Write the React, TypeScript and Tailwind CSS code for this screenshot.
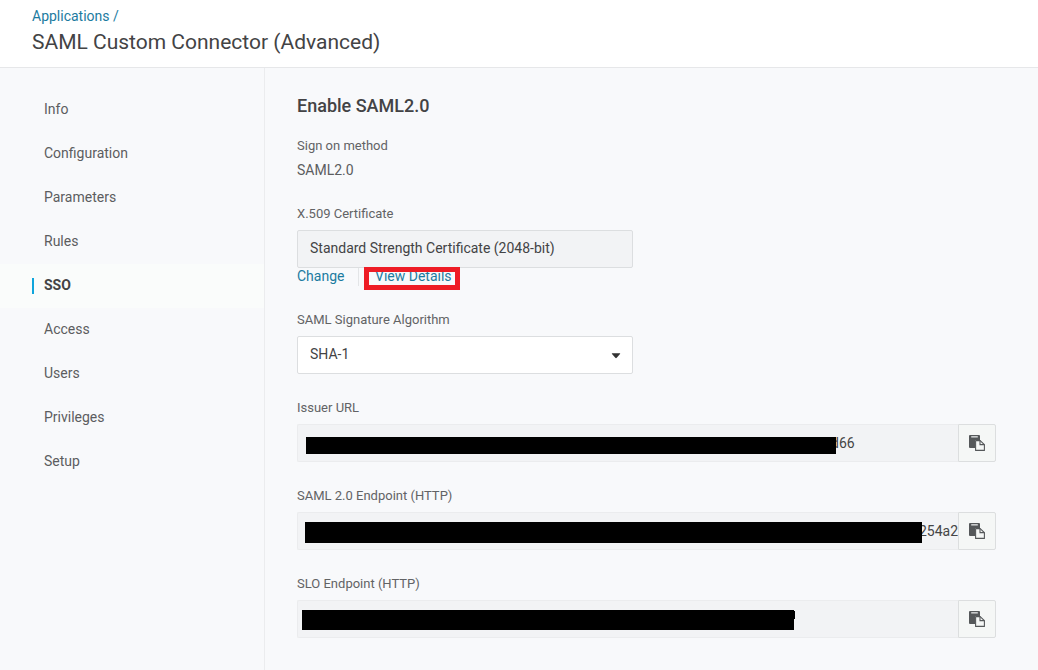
import React from "react";

const navItems = [
  "Info",
  "Configuration",
  "Parameters",
  "Rules",
  "SSO",
  "Access",
  "Users",
  "Privileges",
  "Setup",
];

const labelClass = "block text-[13px] leading-5 text-[#626365]";

function PasteIcon() {
  return (
    <svg width="18" height="16" viewBox="0 0 18 16" aria-hidden="true">
      <path d="M2 0h9q1 0 1 1v4H7v8H2q-1 0-1-1V1q0-1 1-1z" fill="#55585a" />
      <path d="M3.2 1h6.6v1.6H3.2z" fill="#c9cbcc" />
      <path
        d="M7.6 5.6h4.6l4.2 4v5.8H7.6z"
        fill="#f5f7f6"
        stroke="#55585a"
        strokeWidth="1.1"
        strokeLinejoin="round"
      />
      <path d="M12 5.6v4h4.4" fill="none" stroke="#55585a" strokeWidth="1.1" />
    </svg>
  );
}

type CopyFieldProps = {
  id: string;
  label: string;
  value: string;
  inset: string;
  children: React.ReactNode;
};

function CopyField({ id, label, value, inset, children }: CopyFieldProps) {
  return (
    <div>
      <label htmlFor={id} className={labelClass}>
        {label}
      </label>
      <div className="mt-1.5 flex h-[38px]">
        <div className="relative min-w-0 flex-1">
          <input
            id={id}
            readOnly
            value={value}
            className={`h-full w-full rounded-l-xs border border-r-0 border-[#ebecee] bg-[#f2f3f5] text-sm text-[#454546] outline-none ${inset}`}
          />
          {children}
        </div>
        <button
          type="button"
          aria-label={`Copy ${label}`}
          className="flex w-[38px] items-center justify-center rounded-r-xs border border-[#dcdedf] bg-[#f5f7f6]"
        >
          <PasteIcon />
        </button>
      </div>
    </div>
  );
}

export default function App() {
  return (
    <div className="flex min-h-screen flex-col bg-[#f8f9fb] font-['Roboto',sans-serif] text-sm text-[#5c5d5f]">
      <header className="border-b border-[#e6e7e9] bg-white px-8 pt-1.5 pb-[11px]">
        <nav aria-label="Breadcrumb" className="leading-5 text-[#1c7ba0]">
          <a href="#applications">Applications</a> <span>/</span>
        </nav>
        <h1 className="mt-0.5 text-[21px] leading-7 text-[#434345]">
          SAML Custom Connector (Advanced)
        </h1>
      </header>

      <div className="flex flex-1">
        <aside className="w-[265px] shrink-0 border-r border-[#ebecee] pt-5">
          <nav aria-label="Application settings">
            <ul>
              {navItems.map((item) => {
                const active = item === "SSO";
                return (
                  <li key={item}>
                    <a
                      href={`#${item.toLowerCase()}`}
                      aria-current={active ? "page" : undefined}
                      className={
                        active
                          ? "flex h-11 items-center bg-[#fafcfb] pl-8 font-bold text-[#434345]"
                          : "flex h-11 items-center pl-8"
                      }
                    >
                      <span
                        className={
                          active
                            ? "h-4 border-l-2 border-[#0fa5dc] pl-2.5 leading-[14px]"
                            : "h-4 border-l-2 border-transparent pl-2.5 leading-[14px]"
                        }
                      >
                        {item}
                      </span>
                    </a>
                  </li>
                );
              })}
            </ul>
          </nav>
        </aside>

        <main className="min-w-0 flex-1 pt-[26px] pr-[42px] pb-8 pl-8">
          <h2 className="text-lg leading-6 font-medium text-[#434345]">Enable SAML2.0</h2>

          <div className="mt-[18px] flex flex-col gap-6">
            <div>
              <p className={labelClass}>Sign on method</p>
              <p className="mt-1 leading-5">SAML2.0</p>
            </div>

            <div>
              <label htmlFor="certificate" className={labelClass}>
                X.509 Certificate
              </label>
              <input
                id="certificate"
                readOnly
                value="Standard Strength Certificate (2048-bit)"
                className="mt-1.5 block h-[38px] w-full max-w-[336px] rounded-xs border border-[#dcdee0] bg-[#f2f3f5] px-3 pb-0.5 text-sm text-[#434345] outline-none"
              />
              <div className="flex h-[18px] leading-4 text-[#1c7ba0]">
                <a href="#change" className="w-[62px] border-r border-[#e3e5e7]">
                  Change
                </a>
                <a href="#details" className="relative ml-4">
                  View Details
                  <span className="absolute -top-px -right-2 -bottom-1 -left-[11px] border-5 border-[#ee1c25]" />
                </a>
              </div>
            </div>

            <div>
              <label htmlFor="algorithm" className={labelClass}>
                SAML Signature Algorithm
              </label>
              <div className="relative mt-1.5 h-[38px] max-w-[336px]">
                <select
                  id="algorithm"
                  className="h-full w-full appearance-none rounded-xs border border-[#dcdee0] bg-white px-3 pb-0.5 text-sm text-[#434345] outline-none"
                >
                  <option>SHA-1</option>
                </select>
                <svg
                  width="10"
                  height="6"
                  viewBox="0 0 10 6"
                  aria-hidden="true"
                  className="pointer-events-none absolute top-[17px] right-3"
                >
                  <path d="M1.2 0.2h7.6q.8.2.2.9L5.7 4.8q-.7.7-1.4 0L1 1.1Q.4.4 1.2.2z" fill="#333" />
                </svg>
              </div>
            </div>

            <CopyField id="issuer" label="Issuer URL" value="d66" inset="pl-[533px]">
              <span className="absolute top-[13px] left-[9px] h-[17px] w-[530px] bg-black" />
            </CopyField>
            <CopyField
              id="saml-endpoint"
              label="SAML 2.0 Endpoint (HTTP)"
              value="254a2"
              inset="pl-[621px]"
            >
              <span className="absolute top-[10px] left-2 h-[21px] w-[617px] bg-black" />
            </CopyField>
            <CopyField id="slo-endpoint" label="SLO Endpoint (HTTP)" value="" inset="pl-3">
              <span className="absolute top-[10px] left-[5px] h-5 w-[492px] bg-black" />
              <span className="absolute top-[11px] left-[497px] h-2 w-px bg-black" />
            </CopyField>
          </div>
        </main>
      </div>
    </div>
  );
}
